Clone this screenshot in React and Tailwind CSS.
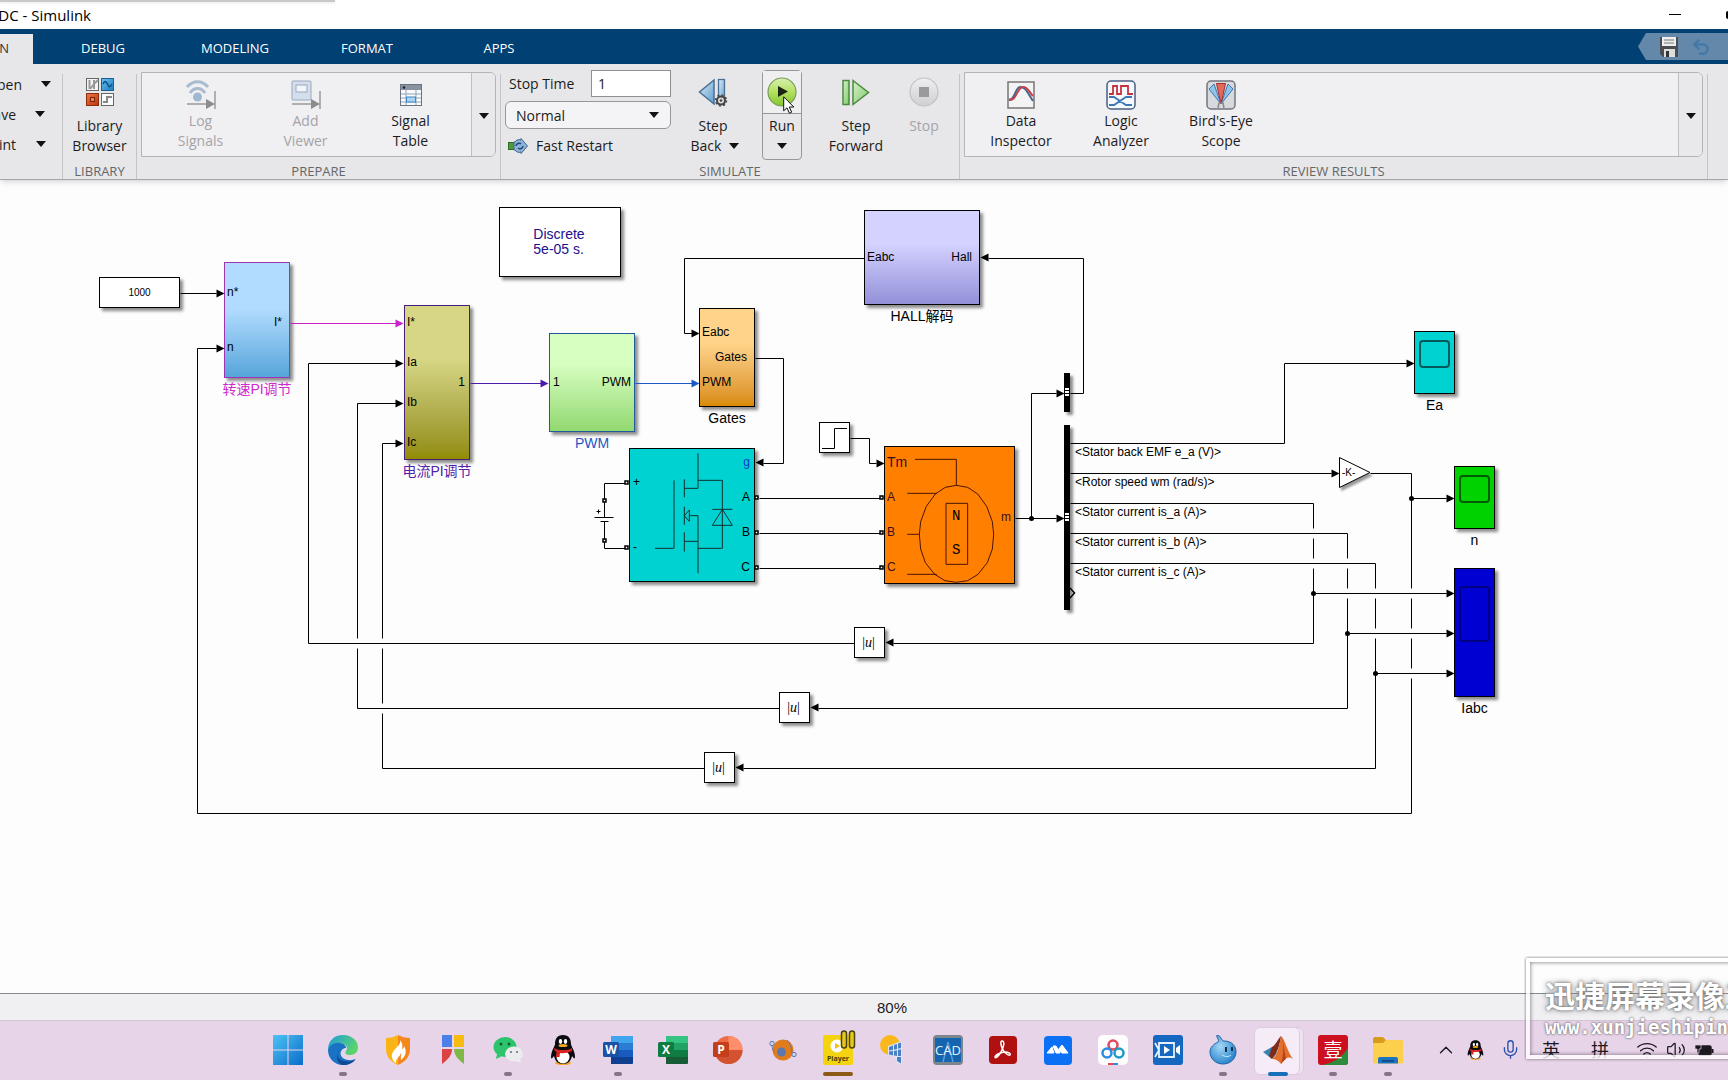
import { useState } from "react";
import { ChevronUp, Mic, Wifi, Volume2, Undo2 } from "lucide-react";

const ribbonFont = "font-['Open_Sans','Noto_Sans_CJK_SC',sans-serif]";
const blockFont = "font-['Liberation_Sans','Noto_Sans_CJK_SC',sans-serif]";

const Caret = ({ className = "" }) => (
  <svg viewBox="0 0 10 6" className={`w-[10px] h-[6px] shrink-0 ${className}`}><path d="M0 0h10L5 6z" fill="#111" /></svg>
);

/* ---------- toolstrip icons ---------- */

const LibraryIcon = () => (
  <svg viewBox="0 0 28 28" className="w-7 h-7">
    <defs>
      <linearGradient id="lib-b" x1="0" y1="0" x2="1" y2="1"><stop offset="0" stopColor="#6cc0ee" /><stop offset="1" stopColor="#1c7cc0" /></linearGradient>
      <linearGradient id="lib-r" x1="0" y1="0" x2="1" y2="1"><stop offset="0" stopColor="#ee7a44" /><stop offset="1" stopColor="#b83410" /></linearGradient>
    </defs>
    <rect x="0.5" y="0.5" width="12" height="12" fill="#f4f4f4" stroke="#666" />
    <path d="M3.500 2v9M4 11l4-5V2M8 11V6l4-4" fill="none" stroke="#999" strokeWidth="2" />
    <rect x="15.5" y="0.5" width="12" height="12" fill="url(#lib-b)" stroke="#1b5f94" />
    <path d="M17 6c2-5 4-1 5 1s2 3 4-1" fill="none" stroke="#0b4f86" strokeWidth="1.500" />
    <rect x="0.5" y="15.5" width="12" height="12" fill="url(#lib-r)" stroke="#8f2c0c" />
    <rect x="4.5" y="19.5" width="4" height="4" fill="#e9824f" stroke="#7c2408" />
    <rect x="15.5" y="15.5" width="12" height="12" fill="#fafafa" stroke="#666" />
    <path d="M17 24h4v-5h5" fill="none" stroke="#888" strokeWidth="2" />
  </svg>
);

const LogSignalsIcon = () => (
  <svg viewBox="0 0 30 30" className="w-[30px] h-[30px]">
    <path d="M1 7c6-7 15-7 21 0M4 13c4-6 11-6 15 0" fill="none" stroke="#a9bccf" strokeWidth="3" />
    <circle cx="11.500" cy="17" r="4.500" fill="#a0b8d0" />
    <path d="M1 24h20M29 11v18" stroke="#9a9a9a" strokeWidth="1.500" />
    <path d="M20 19l9 5-9 5z" fill="#8c8c8c" />
  </svg>
);

const AddViewerIcon = () => (
  <svg viewBox="0 0 30 30" className="w-[30px] h-[30px]">
    <rect x="1" y="1" width="19" height="19" rx="1" fill="#d5dfec" stroke="#97a8bf" />
    <rect x="5" y="5" width="11" height="7" fill="#f1f5fa" stroke="#97a8bf" />
    <path d="M1 24h20M29 11v18" stroke="#9a9a9a" strokeWidth="1.500" />
    <path d="M20 19l9 5-9 5z" fill="#8c8c8c" />
  </svg>
);

const SignalTableIcon = () => (
  <svg viewBox="0 0 22 22" className="w-[22px] h-[30px]">
    <rect x="0.5" y="0.5" width="21" height="21" fill="#fbfbfb" stroke="#6b7480" />
    <path d="M1 1h20v5H1z" fill="#8792a3" />
    <circle cx="4" cy="3.500" r="1.300" fill="#222" />
    <path d="M1 10h20M1 14h20M1 18h20M6 6v15M16 6v15" stroke="#8fa3b8" />
    <rect x="6.500" y="13" width="9" height="5" fill="#a8d4f5" stroke="#3c86c4" />
  </svg>
);

const FastRestartIcon = () => (
  <svg viewBox="0 0 20 16" className="w-5 h-4">
    <rect x="0.500" y="4.500" width="6" height="7" fill="#4f9a3c" stroke="#2d6b22" />
    <path d="M6 4h1c1-2 4-3 6-2V.5L19.500 8 13 15.500V14c-2 1-5 0-6-2H6z" fill="#8fb2da" stroke="#41648c" />
    <path d="M8 8a3 3 0 015-2M15 8a3 3 0 01-5 2" fill="none" stroke="#1d4878" strokeWidth="1.500" />
  </svg>
);

const StepBackIcon = () => (
  <svg viewBox="0 0 30 30" className="w-[30px] h-[30px]">
    <defs><linearGradient id="sb" x1="0" y1="0" x2="1" y2="1"><stop offset="0" stopColor="#d9ecfa" /><stop offset="1" stopColor="#5f9bcb" /></linearGradient></defs>
    <path d="M16 2v24L1.500 14z" fill="url(#sb)" stroke="#4b6f92" strokeWidth="1.500" />
    <rect x="20.500" y="1.500" width="6" height="25" fill="url(#sb)" stroke="#4b6f92" strokeWidth="1.300" />
    <circle cx="23" cy="22.500" r="4" fill="#ddd" stroke="#444" strokeWidth="2" />
    <circle cx="23" cy="22.500" r="5.500" fill="none" stroke="#444" strokeWidth="1.500" strokeDasharray="2 2.300" />
    <circle cx="23" cy="22.500" r="1.300" fill="#444" />
  </svg>
);

const RunIcon = () => (
  <svg viewBox="0 0 30 30" className="w-[30px] h-[30px]">
    <defs><linearGradient id="run" x1="0" y1="0" x2="0" y2="1"><stop offset="0" stopColor="#d6f0b0" /><stop offset=".5" stopColor="#b4e060" /><stop offset="1" stopColor="#84c42c" /></linearGradient></defs>
    <circle cx="15" cy="15" r="14" fill="url(#run)" stroke="#7a9c5c" strokeWidth="1.200" />
    <path d="M11 9l10 5.500L11 20z" fill="#1c2416" />
  </svg>
);

const StepForwardIcon = () => (
  <svg viewBox="0 0 30 30" className="w-[30px] h-[30px]">
    <defs><linearGradient id="sf" x1="0" y1="0" x2="1" y2="1"><stop offset="0" stopColor="#d8f2cc" /><stop offset="1" stopColor="#7fc86a" /></linearGradient></defs>
    <rect x="2" y="2.500" width="6" height="24" fill="url(#sf)" stroke="#4c8a42" strokeWidth="1.500" />
    <path d="M12 2.500L27.500 14.500 12 26.500z" fill="url(#sf)" stroke="#4c8a42" strokeWidth="1.500" />
  </svg>
);

const StopIcon = () => (
  <svg viewBox="0 0 30 30" className="w-[30px] h-[30px]">
    <defs><linearGradient id="stop" x1="0" y1="0" x2="0" y2="1"><stop offset="0" stopColor="#efeff0" /><stop offset="1" stopColor="#cfcfd2" /></linearGradient></defs>
    <circle cx="15" cy="15" r="14" fill="url(#stop)" stroke="#c2c2c4" strokeWidth="1.200" />
    <rect x="10" y="10" width="10" height="10" fill="#9a9a9c" />
  </svg>
);

const DataInspectorIcon = () => (
  <svg viewBox="0 0 28 30" className="w-7 h-[30px]">
    <rect x="1" y="2" width="26" height="26" fill="#f3f3f4" stroke="#777" strokeWidth="1.500" />
    <path d="M2 20c6 1 6-13 11-13s6 3 8 6 3 5 5 8" fill="none" stroke="#44688f" strokeWidth="2" />
    <path d="M2 19c7 4 8-12 14-12 5 0 6 5 10 9" fill="none" stroke="#c8404a" strokeWidth="2" />
  </svg>
);

const LogicAnalyzerIcon = () => (
  <svg viewBox="0 0 30 30" className="w-[30px] h-[30px]">
    <rect x="1" y="1" width="28" height="28" rx="4" fill="#f5f8fc" stroke="#4a5f80" strokeWidth="1.500" />
    <path d="M3 14h4V6h4v8h4V6h7v8h5" fill="none" stroke="#c8323c" strokeWidth="1.800" />
    <path d="M3 17h5l12 8h6M3 25h5l12-8h6" fill="none" stroke="#3c78b4" strokeWidth="1.800" />
  </svg>
);

const BirdsEyeIcon = () => (
  <svg viewBox="0 0 30 30" className="w-[30px] h-[30px]">
    <rect x="1" y="1" width="28" height="28" rx="4" fill="#d8d9dc" stroke="#707680" strokeWidth="1.500" />
    <path d="M3 9l5-5 7 20z" fill="#8ec4ea" stroke="#3c78b4" />
    <path d="M27 9l-5-5-7 20z" fill="#8ec4ea" stroke="#3c78b4" />
    <path d="M10.500 3.500h9L15 24z" fill="#e06a5c" stroke="#a82c2c" />
    <path d="M12 28l1-5h4l1 5" fill="none" stroke="#888" strokeWidth="1.500" />
  </svg>
);

/* ---------- toolstrip ---------- */

const Separator = () => <div className="w-px bg-[#c4c4c8] mt-[10px] shrink-0" />;

const Section = ({ title, className = "", children }) => (
  <section className={`flex flex-col pt-2 shrink-0 ${className}`}>
    <div className="h-[91px]">{children}</div>
    <h2 className="text-center text-[13px] leading-4 text-[#666]">{title}</h2>
  </section>
);

const GalleryItem = ({ icon, label, disabled, className }) => (
  <button disabled={disabled} className={`flex flex-col items-center pt-[7px] text-[14px] leading-5 ${className} ${disabled ? "text-[#a4a4a8]" : "text-[#1c1c1c]"}`}>
    <span className="h-[31px] flex items-start">{icon}</span>
    {label.map((l) => <span key={l}>{l}</span>)}
  </button>
);

const Gallery = ({ name, children }) => (
  <div className="h-[85px] mx-1 flex border border-[#b4b4b8] rounded-r-md bg-[#f0eff2] overflow-hidden">
    <div className="flex flex-1 pl-[6px]">{children}</div>
    <button aria-label={name} className="w-6 border-l border-[#c0c0c4] bg-[#e9e9ec] flex items-center justify-center"><Caret className="mt-[2px]" /></button>
  </div>
);

const fileMenu = [
  { label: "Open", w: "w-[22px]", gap: "ml-[19px]" },
  { label: "Save", w: "w-4", gap: "ml-[19px]" },
  { label: "Print", w: "w-4", gap: "ml-5" },
];

const Toolstrip = () => {
  const [stopTime, setStopTime] = useState("1");
  const [mode, setMode] = useState("Normal");

  return (
    <div className="relative z-10 h-[116px] flex bg-[#e7e7ea] border-b border-[#a4a4a8] shadow-md text-[14px] text-[#1c1c1c]">
      <div className="w-[62px] shrink-0 pt-[5px]">
        {fileMenu.map((m) => (
          <button key={m.label} className="h-[30px] flex items-center">
            <span className={`flex justify-end overflow-hidden ${m.w}`}>{m.label}</span>
            <Caret className={m.gap} />
          </button>
        ))}
      </div>
      <Separator />
      <Section title="LIBRARY" className="w-[73px]">
        <button className="w-full flex flex-col items-center pt-[6px] leading-5">
          <LibraryIcon />
          <span className="mt-[10px]">Library</span>
          <span>Browser</span>
        </button>
      </Section>
      <Separator />
      <Section title="PREPARE" className="w-[363px]">
        <Gallery name="More prepare tools">
          <GalleryItem className="w-[105px]" icon={<LogSignalsIcon />} label={["Log", "Signals"]} disabled />
          <GalleryItem className="w-[105px]" icon={<AddViewerIcon />} label={["Add", "Viewer"]} disabled />
          <GalleryItem className="w-[105px]" icon={<SignalTableIcon />} label={["Signal", "Table"]} />
        </Gallery>
      </Section>
      <Separator />
      <Section title="SIMULATE" className="w-[458px]">
        <div className="flex -mt-[2px]">
          <div className="w-[166px] ml-1">
            <div className="flex items-center justify-between">
              <label htmlFor="stop-time" className="ml-1">Stop Time</label>
              <input id="stop-time" value={stopTime} onChange={(e) => setStopTime(e.target.value)} className="w-20 h-[27px] px-[6px] bg-white border border-[#8f8f93] outline-none" />
            </div>
            <div className="relative mt-1">
              <select aria-label="Simulation mode" value={mode} onChange={(e) => setMode(e.target.value)} className="appearance-none w-full h-7 pl-[10px] rounded-md border border-[#97979b] bg-[#f4f4f6] outline-none">
                <option>Normal</option>
                <option>Accelerator</option>
                <option>Rapid Accelerator</option>
              </select>
              <Caret className="absolute right-3 top-[11px] pointer-events-none" />
            </div>
            <button className="flex items-center gap-2 mt-[7px] ml-[3px] leading-5"><FastRestartIcon />Fast Restart</button>
          </div>
          <button className="w-[70px] ml-[7px] flex flex-col items-center pt-2 leading-5">
            <StepBackIcon />
            <span className="mt-2">Step</span>
            <span className="flex items-center gap-2 pl-1">Back <Caret /></span>
          </button>
          <div className="relative w-10 h-[90px] ml-[14px] rounded-[4px] border border-[#97979b] flex flex-col">
            <button aria-label="Run" className="h-[43px] w-full flex items-center justify-center bg-[#efeff1] border-b border-[#97979b]"><RunIcon /></button>
            <button className="flex-1 flex flex-col items-center leading-5 pt-[2px]">Run<Caret className="mt-[7px]" /></button>
            <svg viewBox="0 0 12 18" className="absolute left-5 top-[25px] w-3 h-[18px]">
              <path d="M.7.8v14l3.300-3 2.400 5.400 2.300-1-2.400-5.200h4.500z" fill="#fff" stroke="#111" />
            </svg>
          </div>
          <button className="w-[66px] ml-[21px] flex flex-col items-center pt-2 leading-5">
            <StepForwardIcon />
            <span className="mt-2">Step</span>
            <span>Forward</span>
          </button>
          <button disabled className="w-10 ml-[15px] flex flex-col items-center pt-[7px] leading-5 text-[#a4a4a8]">
            <StopIcon />
            <span className="mt-[9px]">Stop</span>
          </button>
        </div>
      </Section>
      <Separator />
      <Section title="REVIEW RESULTS" className="flex-1">
        <Gallery name="More result viewers">
          <GalleryItem className="w-[100px]" icon={<DataInspectorIcon />} label={["Data", "Inspector"]} />
          <GalleryItem className="w-[100px]" icon={<LogicAnalyzerIcon />} label={["Logic", "Analyzer"]} />
          <GalleryItem className="w-[100px]" icon={<BirdsEyeIcon />} label={["Bird's-Eye", "Scope"]} />
        </Gallery>
      </Section>
      <Separator />
      <div className="w-5 shrink-0" />
    </div>
  );
};

const Header = () => (
  <header className="shrink-0">
    <div className="relative h-[29px] bg-white flex items-center justify-between">
      <div className="absolute left-0 top-0 w-[335px] h-[2px] bg-[#c9c9c9] shadow-sm" />
      <h1 className="w-[91px] flex justify-end overflow-hidden whitespace-nowrap text-[15px] leading-5 text-black">DC - Simulink</h1>
      <div className="flex items-center gap-[45px]">
        <button aria-label="Minimize" className="w-3 h-5 flex items-center"><span className="w-3 h-px bg-black" /></button>
        <button aria-label="Maximize" className="w-[2px] h-2 border-l-2 border-black rounded-l" />
      </div>
    </div>
    <nav className="h-[35px] bg-[#004073] flex items-end justify-between text-[13px] text-white">
      <div className="flex items-end">
        <button className="w-[33px] h-[30px] pr-6 mr-1 flex items-center justify-end overflow-hidden bg-[#e7e7ea] text-[#333]">SIMULATION</button>
        {["DEBUG", "MODELING", "FORMAT", "APPS"].map((t) => (
          <button key={t} className="w-[132px] h-[30px]">{t}</button>
        ))}
      </div>
      <div className="relative w-[90px] h-[27px] mb-1 flex items-center">
        <svg viewBox="0 0 90 27" className="absolute inset-0 w-[90px] h-[27px]"><path d="M0 13.500L8 0h82v27H8z" fill="#6488aa" /></svg>
        <button aria-label="Save" className="relative ml-[21px]">
          <svg viewBox="0 0 20 20" className="w-5 h-5">
            <path d="M1 0h18v20H4l-3-3z" fill="#4a4d52" />
            <path d="M3 0h14v9H3z" fill="#eee" />
            <path d="M5 3h10M5 6h10" stroke="#777" />
            <path d="M5 12h11v8H5z" fill="#ddd" />
            <path d="M7 14h3v6H7z" fill="#333" />
          </svg>
        </button>
        <button aria-label="Undo" className="relative ml-3 text-[#4478a6]"><Undo2 size={20} strokeWidth={3} /></button>
      </div>
    </nav>
    <Toolstrip />
  </header>
);

/* ---------- block diagram ---------- */

// lines that leave or join blocks; a gap in a vertical line is a crossing
const wires = [
  { d: "M180 293H216", tip: [224, 293] },
  { d: "M290 323H396", tip: [403, 323], color: "#c822c8" },
  { d: "M470 383H541", tip: [548, 383], color: "#4a1ca8" },
  { d: "M635 383H692", tip: [699, 383], color: "#1e58c8" },
  { d: "M1370 473H1411V588M1411 598V628M1411 638V668M1411 678V813H197V348H216", tip: [224, 348] },
  { d: "M1411 498H1446", tip: [1454, 498] },
  { d: "M854 643H308V363H396", tip: [403, 363] },
  { d: "M779 708H357V648M357 638V403H396", tip: [403, 403] },
  { d: "M704 768H382V713M382 703V648M382 638V443H396", tip: [403, 443] },
  { d: "M864 258H684V333H692", tip: [699, 333] },
  { d: "M755 358H783V463H763", tip: [755, 462], left: true },
  { d: "M850 438H869V463H876", tip: [884, 463] },
  { d: "M759 498H880M759 533H880M759 568H880" },
  { d: "M1015 518H1056", tip: [1064, 518] },
  { d: "M1031 518V393H1056", tip: [1064, 393] },
  { d: "M1070 393H1083V258H988", tip: [980, 257], left: true },
  { d: "M1070 443H1284V363H1406", tip: [1414, 363] },
  { d: "M1070 473H1331", tip: [1339, 473] },
  { d: "M1070 503H1313V528M1313 538V558M1313 568V643H893", tip: [885, 642], left: true },
  { d: "M1070 533H1347V558M1347 568V588M1347 598V708H818", tip: [810, 707], left: true },
  { d: "M1070 563H1375V588M1375 598V628M1375 638V768H743", tip: [735, 767], left: true },
  { d: "M1313 593H1446", tip: [1454, 593] },
  { d: "M1347 633H1446", tip: [1454, 633] },
  { d: "M1375 673H1446", tip: [1454, 673] },
];

const dots = [[1031, 518], [1411, 498], [1313, 593], [1347, 633], [1375, 673]];
const ports = [[756, 497], [756, 532], [756, 567], [881, 497], [881, 532], [881, 567], [626, 482], [626, 547], [604, 500], [604, 540]];

const Wires = () => (
  <svg viewBox="0 180 1728 813" className="absolute left-0 top-0 w-[1728px] h-[813px]">
    <g transform="translate(.5 .5)">
      {wires.map((w) => (
        <g key={w.d}>
          <path d={w.d} fill="none" stroke={w.color || "#000"} />
          {w.tip && <path d={w.left ? `M${w.tip[0]} ${w.tip[1]}l8-4v8z` : `M${w.tip[0]} ${w.tip[1]}l-8-4v8z`} fill={w.color || "#000"} />}
        </g>
      ))}
      {dots.map(([x, y]) => <circle key={`${x}-${y}`} cx={x} cy={y} r="2.500" />)}
      {/* dc source */}
      <path d="M627 483H604V517M594 517H613M600 521H608M604 521V548H627M596 511h4M598 509v4" fill="none" stroke="#000" />
      {ports.map(([x, y]) => <rect key={`${x}-${y}`} x={x - 1.500} y={y - 1.500} width="3" height="3" fill="#fff" stroke="#000" strokeWidth="1.500" />)}
    </g>
  </svg>
);

const shadow = "shadow-[3px_3px_3px_rgba(0,0,0,0.45)]";

const Block = ({ border = "border-black", className, children }) => (
  <div className={`absolute border ${border} ${shadow} ${className}`}>{children}</div>
);

const Port = ({ className, children }) => (
  <span className={`absolute text-[12px] leading-4 ${className}`}>{children}</span>
);

const Name = ({ className = "", children }) => (
  <span className={`absolute top-full left-1/2 -translate-x-1/2 mt-1 whitespace-nowrap text-[14px] leading-4 ${className}`}>{children}</span>
);

const Scope = ({ className, screen, name }) => (
  <Block className={className}>
    <div className={`mx-1 border-2 rounded-[4px] ${screen}`} />
    <Name>{name}</Name>
  </Block>
);

const signals = ["<Stator back EMF e_a (V)>", "<Rotor speed wm (rad/s)>", "<Stator current is_a (A)>", "<Stator current is_b (A)>", "<Stator current is_c (A)>"];

const BusPort = ({ className }) => (
  <div className={`absolute left-px w-1 h-2 bg-white border-y border-white flex flex-col justify-evenly ${className}`}>
    <span className="h-px bg-black" />
    <span className="h-px bg-black" />
  </div>
);

const Abs = ({ className }) => (
  <Block className={`w-[31px] h-[31px] pr-[2px] bg-white flex items-center justify-center font-['Liberation_Serif',serif] text-[14px] leading-4 ${className}`}>
    |<i>u</i>|
  </Block>
);

const Diagram = () => (
  <main className={`relative flex-1 min-h-[813px] overflow-hidden bg-[#fdfdfd] text-black ${blockFont}`}>
    <Block className="left-[99px] top-[97px] w-[81px] h-[31px] bg-white text-[10px] flex items-center justify-center">1000</Block>

    <Block border="border-[#a032b4]" className="left-[224px] top-[82px] w-[66px] h-[116px] bg-linear-to-b from-[#b2dcff] from-40% to-[#55a5da]">
      <Port className="left-[2px] top-[21px]">n*</Port>
      <Port className="right-[7px] top-[51px]">I*</Port>
      <Port className="left-[2px] top-[76px]">n</Port>
      <Name className="text-[#cc2ccc]">转速PI调节</Name>
    </Block>

    <Block border="border-[#48207c]" className="left-[404px] top-[125px] w-[66px] h-[155px] bg-linear-to-b from-[#d6d684] from-35% to-[#928c00]">
      <Port className="left-[2px] top-[8px]">I*</Port>
      <Port className="left-[2px] top-[48px]">Ia</Port>
      <Port className="left-[2px] top-[88px]">Ib</Port>
      <Port className="left-[2px] top-[128px]">Ic</Port>
      <Port className="right-[4px] top-[68px]">1</Port>
      <Name className="text-[#5020a8]">电流PI调节</Name>
    </Block>

    <Block className="left-[499px] top-[27px] w-[122px] h-[70px] pr-[2px] bg-white flex items-center justify-center">
      <p className="text-[14px] leading-[15px] text-[#1a1090]">Discrete<br />5e-05 s.</p>
    </Block>

    <Block border="border-[#205a9c]" className="left-[549px] top-[153px] w-[86px] h-[99px] bg-linear-to-b from-[#d8ffc2] from-30% to-[#92d870]">
      <Port className="left-[3px] top-[40px]">1</Port>
      <Port className="right-[3px] top-[40px]">PWM</Port>
      <Name className="text-[#1e58c8]">PWM</Name>
    </Block>

    <Block className="left-[699px] top-[128px] w-[56px] h-[99px] bg-linear-to-b from-[#ffd48a] from-35% to-[#d88c00]">
      <Port className="left-[2px] top-[15px]">Eabc</Port>
      <Port className="right-[7px] top-[40px]">Gates</Port>
      <Port className="left-[2px] top-[65px]">PWM</Port>
      <Name>Gates</Name>
    </Block>

    <Block className="left-[864px] top-[30px] w-[116px] h-[95px] bg-linear-to-b from-[#d4d2ff] from-35% to-[#9490d8]">
      <Port className="left-[2px] top-[38px]">Eabc</Port>
      <Port className="right-[7px] top-[38px]">Hall</Port>
      <Name>HALL解码</Name>
    </Block>

    {/* mosfet bridge */}
    <Block className="left-[629px] top-[268px] w-[126px] h-[134px] bg-[#00d2d2]">
      <svg viewBox="151 147 372 396" className="absolute inset-0 w-full h-full">
        <path d="M226 445H283V241M314 238v54M314 320v54M314 397v58M355 160V265H314M314 424H355M330 347H355V520M355 241H428V445H355M398 328h60M428 328l-30 48h60zM314 347l15-17v34z" fill="none" stroke="#12302f" strokeWidth="3" />
      </svg>
      <Port className="right-1 top-[5px] text-[#0a3cc8]">g</Port>
      <Port className="right-1 top-[40px]">A</Port>
      <Port className="right-1 top-[75px]">B</Port>
      <Port className="right-1 top-[110px]">C</Port>
      <Port className="left-[3px] top-[25px]">+</Port>
      <Port className="left-[3px] top-[90px]">-</Port>
    </Block>

    {/* load torque step */}
    <Block className="left-[819px] top-[242px] w-[31px] h-[31px] bg-white">
      <svg viewBox="0 0 29 29" className="w-full h-full"><path d="M2 25.500H14.500V5.500H27" fill="none" stroke="#000" /></svg>
    </Block>

    {/* permanent magnet machine */}
    <Block className="left-[884px] top-[266px] w-[131px] h-[138px] bg-[#ff8000] text-[#3a0c20]">
      <svg viewBox="915 141 387 408" className="absolute inset-0 w-full h-full">
        <path d="M1005 178H1129V256M982 280h88M982 403h37M982 523h88M1098 310h65v183h-65zM1129 256l34 6 30 20 27 37 17 46 4 38-4 44-15 41-28 35-31 19-34 5-34-5-31-19-28-35-14-41-4-44 4-38 17-46 27-37 30-20z" fill="none" stroke="#4a1400" strokeWidth="3" />
      </svg>
      <span className="absolute left-[2px] top-[7px] text-[14px] leading-4">Tm</span>
      <Port className="left-[2px] top-[42px]">A</Port>
      <Port className="left-[2px] top-[77px]">B</Port>
      <Port className="left-[2px] top-[112px]">C</Port>
      <Port className="right-[3px] top-[62px]">m</Port>
      <span className="absolute left-[67px] top-[61px] text-[14px] leading-4 text-black font-['Liberation_Mono',monospace]">N</span>
      <span className="absolute left-[67px] top-[95px] text-[14px] leading-4 text-black font-['Liberation_Mono',monospace]">S</span>
    </Block>

    <div className={`absolute left-[1064px] top-[193px] w-[6px] h-[39px] bg-black ${shadow}`}><BusPort className="top-[15px]" /></div>
    <div className={`absolute left-[1064px] top-[245px] w-[6px] h-[185px] bg-black ${shadow}`}>
      <BusPort className="top-[88px]" />
      <svg viewBox="0 0 6 12" className="absolute left-[6px] bottom-[11px] w-[6px] h-3"><path d="M0 1l4.500 5L0 11" fill="none" stroke="#000" strokeWidth="1.500" /></svg>
      <ul className="absolute left-[11px] top-[19px] whitespace-nowrap text-[12px] leading-4">
        {signals.map((s) => <li key={s} className="h-[30px]">{s}</li>)}
      </ul>
    </div>

    <div className="absolute left-[1338px] top-[276px] w-[34px] h-[32px]">
      <svg viewBox="0 0 34 32" className="absolute inset-0 w-full h-full drop-shadow-[2px_3px_1px_rgba(0,0,0,0.4)]"><path d="M1.500 1.500v30L32 16.500z" fill="#fff" stroke="#000" /></svg>
      <span className="absolute left-1 top-[9px] text-[10px] leading-4">-K-</span>
    </div>

    <Scope name="Ea" className="left-[1414px] top-[151px] w-[41px] h-[63px] bg-[#00d2d2] pt-2" screen="h-7 border-[#045a5a]" />
    <Scope name="n" className="left-[1454px] top-[286px] w-[41px] h-[63px] bg-[#00d200] pt-2" screen="h-7 border-[#045a04]" />
    <Scope name="Iabc" className="left-[1454px] top-[388px] w-[41px] h-[129px] bg-[#0000d2] pt-[17px]" screen="h-14 border-[#000080]" />

    <Abs className="left-[854px] top-[447px]" />
    <Abs className="left-[779px] top-[512px]" />
    <Abs className="left-[704px] top-[572px]" />

    <Wires />
  </main>
);

/* ---------- taskbar ---------- */

const Icon = ({ children }) => <svg viewBox="0 0 30 30" className="w-[30px] h-[30px] font-['Open_Sans','Noto_Sans_CJK_SC',sans-serif]">{children}</svg>;

const OfficeIcon = ({ letter, c }) => (
  <Icon>
    {letter === "P" ? (
      <>
        <circle cx="15.500" cy="15" r="14" fill={c[1]} />
        <path d="M15.500 1a14 14 0 0114 14h-14z" fill={c[0]} />
        <path d="M1.500 15h28a14 14 0 01-28 0z" fill={c[2]} />
      </>
    ) : (
      <>
        <rect x="8" y="1" width="22" height="28" rx="1.500" fill={c[1]} />
        <path d="M8 1h22v7H8z" fill={c[0]} />
        <path d="M8 15h22v7H8z" fill={c[2]} />
        <path d="M8 22h22v5.500a1.500 1.500 0 01-1.500 1.500H8z" fill={c[3]} />
      </>
    )}
    <rect x="0" y="7" width="16" height="15" rx="1.500" fill={c[4]} />
    <text x="8" y="19" textAnchor="middle" fontSize="12" fontWeight="700" fill="#fff">{letter}</text>
  </Icon>
);

const QQ = () => (
  <>
    <ellipse cx="15" cy="28" rx="8" ry="2" fill="#f5a81c" />
    <path d="M15 0c-6 0-8 4-8 9 0 2-4 7-4 13 0 2 1 2 3-1 1 5 4 8 9 8s8-3 9-8c2 3 3 3 3 1 0-6-4-11-4-13 0-5-2-9-8-9z" fill="#0c0c10" />
    <ellipse cx="15" cy="22" rx="6.500" ry="6.500" fill="#fff" />
    <ellipse cx="12.500" cy="6.500" rx="1.700" ry="2.400" fill="#fff" />
    <ellipse cx="17.500" cy="6.500" rx="1.700" ry="2.400" fill="#fff" />
    <ellipse cx="15" cy="10.500" rx="4.500" ry="1.600" fill="#f5a81c" />
    <path d="M6 13c5 3 13 3 18 0v3c-4 2-9 2.500-12 2l-.5 4H8l.5-5-2-1.500z" fill="#dc2020" />
  </>
);

const apps = [
  { name: "Start", icon: <Icon><defs><linearGradient id="win" x1="0" y1="0" x2="1" y2="1"><stop offset="0" stopColor="#4cc2f4" /><stop offset="1" stopColor="#0a6cc8" /></linearGradient></defs><path d="M0 0h14.500v14.500H0zM15.500 0H30v14.500H15.500zM0 15.500h14.500V30H0zM15.500 15.500H30V30H15.500z" fill="url(#win)" /></Icon> },
  { name: "Edge", mark: "dot", icon: <Icon><defs><linearGradient id="edg" x1="0" y1="0" x2="1" y2=".5"><stop offset="0" stopColor="#1c9ce0" /><stop offset="1" stopColor="#5cd46c" /></linearGradient></defs><path d="M0 15C0 6 6 0 15 0s15 6 15 12-4 8-8 8-5-1.500-4.500-3 1.500-2 1.500-4-3-5-7-5C6 8 1 12 0 15z" fill="url(#edg)" /><path d="M0 15C1 10 7 7 12 8c4 0 6 3 6 5-6 0-9 10 2 12 4 .5 6-.5 7.500-1C25 28 20 30 15 30 6 30 0 23 0 15z" fill="#1a72c4" /><path d="M12 14c-4 4-3 11 4 12 5 1 9 0 11.500-2C25 28 20 30 15 30 9 30 7 20 12 14z" fill="#124a94" /></Icon> },
  { name: "Huorong", icon: <Icon><path d="M3 3c5 0 8-1 12-3v30C8 27 3 22 3 14z" fill="#fbb416" /><path d="M27 3c-5 0-8-1-12-3v30c7-3 12-8 12-16z" fill="#f5861a" /><path d="M17 5c2 6-9 9-8 17 .3 3 2 5 4 6-1-5 5-6 5-11 1 3-1 6 0 8 5-4 6-9 3-14 0 2-1 3-2 3 1-4 0-7-2-9z" fill="#fff" /></Icon> },
  { name: "Bookmarks", icon: <Icon><path d="M4 0h10v12H4z" fill="#4c80e8" /><path d="M16 0h10v12H16z" fill="#f8bc10" /><path d="M4 14h10c0 7-5 11-10 15z" fill="#dc4444" /><path d="M16 14h10v15c-5-4-10-8-10-15z" fill="#80b848" /></Icon> },
  { name: "WeChat", mark: "dot", icon: <Icon><ellipse cx="12" cy="12" rx="11.500" ry="10" fill="#2cc46c" /><path d="M4 19l-1 5 6-3z" fill="#2cc46c" /><circle cx="8" cy="9" r="1.500" fill="#145c34" /><circle cx="16" cy="9" r="1.500" fill="#145c34" /><ellipse cx="21" cy="19" rx="9" ry="7.500" fill="#ecebee" /><path d="M27 24l1 4-5-2z" fill="#ecebee" /><circle cx="18" cy="17" r="1.100" fill="#777" /><circle cx="24" cy="17" r="1.100" fill="#777" /></Icon> },
  { name: "QQ", icon: <Icon><QQ /></Icon> },
  { name: "Word", mark: "dot", icon: <OfficeIcon letter="W" c={["#41a5ee", "#2b7cd3", "#185abd", "#103f91", "#1a52a8"]} /> },
  { name: "Excel", icon: <OfficeIcon letter="X" c={["#33c481", "#21a366", "#107c41", "#185c37", "#107c41"]} /> },
  { name: "PowerPoint", icon: <OfficeIcon letter="P" c={["#ff8f6b", "#ed6c47", "#d35230", "#b83b1d", "#c43e1c"]} /> },
  { name: "Orbit", icon: <Icon><circle cx="15" cy="15" r="10.500" fill="#e07c1c" /><path d="M4 10c0 4 1 5 2 7M19 5c3 3 5 8 5 13" stroke="#5c78b0" fill="none" /><circle cx="13.500" cy="17" r="4.500" fill="#5c78b0" /><circle cx="4" cy="8.500" r="2.200" fill="#cfd4ea" stroke="#5c78b0" /><circle cx="26" cy="19.500" r="2.200" fill="#cfd4ea" stroke="#5c78b0" /></Icon> },
  { name: "Player", mark: "gold", icon: <svg viewBox="0 -5 33 35" className="w-[33px] h-[35px] -mt-[5px] ml-[3px] font-['Open_Sans',sans-serif]"><rect width="30" height="30" rx="2" fill="#f4d410" /><circle cx="14" cy="11" r="6.500" fill="#fff" /><path d="M12 8l5 3-5 3z" fill="#f4c010" /><text x="15" y="26" textAnchor="middle" fontSize="7" fontWeight="700" fill="#4a3c08">Player</text><rect x="18.500" y="-4" width="5" height="17" rx="2.500" fill="#e4c820" stroke="#4c440c" strokeWidth="1.500" /><rect x="26.500" y="-4" width="5" height="17" rx="2.500" fill="#e4c820" stroke="#4c440c" strokeWidth="1.500" /></svg> },
  { name: "Solar", icon: <Icon><circle cx="12" cy="10" r="10" fill="#fab81c" /><path d="M10 11l14-5v24l-6-3v-5l-8-2z" fill="#dce8f6" /><path d="M11 12l4-1.500V15l-4 .5zM16 10l3-1v5l-3 .8zM20 8.500L23 7.500V13l-3 .8zM11 16.500l4-.5v4.500l-4-1zM16 16l3-.8V21l-3-.5zM20 15l3-.8V21h-3zM19 22h4v6.500L19 26z" fill="#4c80c4" /></Icon> },
  { name: "CAD", icon: <Icon><rect x="0" y="0" width="30" height="30" rx="4" fill="#7c848c" /><rect x="2" y="3" width="26" height="24" fill="#1464b0" /><path d="M10 27l5-20 5 20" fill="none" stroke="#5c9cd8" strokeWidth="1.500" /><text x="15" y="20" textAnchor="middle" fontSize="13" fill="#e8f4ff">CAD</text></Icon> },
  { name: "Acrobat", icon: <Icon><rect x="1" y="1" width="28" height="28" rx="4" fill="#b01010" /><path d="M14 6c3 0 2 6-1 11s-6 7-6 5 6-5 10-5 6 2 5 3-6-2-8-7c-1-3-2-7 0-7z" fill="none" stroke="#fff" strokeWidth="1.500" /></Icon> },
  { name: "Mubu", icon: <Icon><rect x="1" y="1" width="28" height="29" rx="4" fill="#0c70f4" /><path d="M4 18l5-6 2 6zM10 11h3l4 7h-4zM15 15l4-5 6 8h-6z" fill="#fff" stroke="#fff" strokeLinejoin="round" /></Icon> },
  { name: "Netdisk", icon: <Icon><rect x="0" y="0" width="30" height="30" rx="5" fill="#fdfdfe" /><circle cx="15" cy="10" r="4.500" fill="none" stroke="#e0485c" strokeWidth="2.500" /><circle cx="9" cy="18" r="4.500" fill="none" stroke="#2c8ce4" strokeWidth="2.500" /><circle cx="21" cy="18" r="4.500" fill="none" stroke="#1c9cc4" strokeWidth="2.500" /><path d="M10 29h5" stroke="#e0485c" strokeWidth="2" /><path d="M15 29h5" stroke="#2c8ce4" strokeWidth="2" /></Icon> },
  { name: "Recorder", icon: <Icon><rect x="0" y="0" width="30" height="30" rx="3" fill="#1468c0" /><path d="M2 8l4 7-4 7M6 8h15v14H6z" fill="none" stroke="#e4f0fc" strokeWidth="1.800" /><path d="M11 11l6 4-6 4z" fill="#fff" /><path d="M23 13l4-3v10l-4-3z" fill="#fff" /></Icon> },
  { name: "Aliwangwang", mark: "dot", icon: <Icon><defs><radialGradient id="ali" cx=".4" cy=".4" r=".7"><stop offset="0" stopColor="#a4d8f8" /><stop offset="1" stopColor="#1c7cc8" /></radialGradient></defs><path d="M9 0c5 1 4 6 7 6 8 0 12 5 12 11s-5 12-13 12S2 23 2 17c0-5 4-8 8-10 2-2-2-4-1-7z" fill="url(#ali)" stroke="#2464a0" /><path d="M18 12v5M24 12v4" stroke="#12304c" strokeWidth="2" /><path d="M14 20c3 2 7 2 9 0" fill="none" stroke="#d0ecfc" /></Icon> },
  { name: "MATLAB", mark: "blue", active: true, icon: <Icon><path d="M0 17l9-5 5 6-5 6z" fill="#3c80b0" /><path d="M9 12c3-1 6-8 9-11-1 8-3 16-9 23l-3-3z" fill="#7c2c1c" /><path d="M18 1c4 3 6 15 12 23-5-3-8-1-12 5-2-3-5-5-9-5 6-4 7-13 9-23z" fill="#e0702c" /><path d="M18 1c3 6 3 18 0 28 2-2 3-4 5-5-2-8-2-17-5-23z" fill="#b8401c" /></Icon> },
  { name: "Securities", mark: "dot", icon: <Icon><rect x="0" y="0" width="30" height="30" rx="3" fill="#cc1020" /><path d="M30 13v14a3 3 0 01-3 3H4C16 28 24 22 30 13z" fill="#2c8c3c" /><text x="15" y="22" textAnchor="middle" fontSize="19" fill="#fff">壹</text></Icon> },
  { name: "Explorer", mark: "dot", icon: <Icon><path d="M0 4a2 2 0 012-2h8l3 3h15a2 2 0 012 2v18H0z" fill="#d89c1c" /><path d="M0 8h10l3-3h15a2 2 0 012 2v20a1.500 1.500 0 01-1.500 1.500h-27A1.500 1.500 0 010 27z" fill="#fcd04c" /><path d="M5 28.500V24a2 2 0 012-2h16a2 2 0 012 2v4.500z" fill="#1c74c0" /><path d="M9 26h12" stroke="#0c5090" strokeWidth="2" /></Icon> },
];

const marks = {
  dot: "w-2 bg-[#85748a]",
  gold: "w-[30px] bg-[#8c5a14]",
  blue: "w-5 bg-[#1470b8]",
};

const Taskbar = () => (
  <footer className="relative h-[60px] shrink-0 flex items-center justify-between bg-[#e8d4e9] border-t border-[#d4c4d6] pl-[260px] pr-[14px]">
    <div className="flex">
      {apps.map((a) => (
        <button key={a.name} aria-label={a.name} className="relative w-[55px] h-[58px] pb-[2px] flex items-center justify-center">
          {a.active && (
            <>
              <span className="absolute left-2 top-[5px] w-[46px] h-12 rounded-md bg-[#efe2f2] border border-[#dccbe0]" />
              <span className="absolute left-1 top-[5px] w-[46px] h-12 rounded-md bg-[#f6ecf8] border border-[#dccbe0]" />
            </>
          )}
          <span className="relative flex">{a.icon}</span>
          {a.mark && <span className={`absolute bottom-1 h-1 rounded-full ${marks[a.mark]}`} />}
        </button>
      ))}
    </div>
    <div className="flex items-center pb-[2px] text-[#1c1820]">
      <button aria-label="Hidden icons"><ChevronUp size={22} strokeWidth={1.5} /></button>
      <button aria-label="QQ" className="ml-[10px]"><svg viewBox="2 0 26 30" className="w-[17px] h-5"><QQ /></svg></button>
      <button aria-label="Microphone" className="ml-4 text-[#2850a8]"><Mic size={21} strokeWidth={1.5} /></button>
      <button className="ml-[18px] w-6 text-[18px] leading-6 text-center">英</button>
      <button className="ml-[25px] w-6 text-[18px] leading-6 text-center">拼</button>
      <button aria-label="Network" className="ml-6"><Wifi size={22} strokeWidth={1.5} /></button>
      <button aria-label="Volume" className="ml-2"><Volume2 size={20} strokeWidth={1.5} /></button>
      <button aria-label="Battery" className="ml-2">
        <svg viewBox="0 0 20 16" className="w-5 h-4">
          <rect x="5" y="4" width="12" height="9" rx="1.500" fill="#1c1820" stroke="#1c1820" strokeWidth="1.500" />
          <path d="M18.500 7v4" stroke="#1c1820" strokeWidth="2" />
          <path d="M1 3h6v4H5v4H3V7H1zM2 0v3M6 0v3" fill="#1c1820" stroke="#e8d4e9" strokeWidth=".7" />
        </svg>
      </button>
    </div>
  </footer>
);

// recorder stamp, runs off the right side of the window
const Watermark = () => (
  <div className="absolute right-0 bottom-[18px] z-20 w-[204px] h-[106px] overflow-hidden pointer-events-none pl-[2px] pt-[2px]">
    <div className="w-[320px] h-[101px] border-4 border-white/80 shadow-[0_0_3px_rgba(60,50,60,0.7),inset_0_0_4px_rgba(60,50,60,0.7)] pl-[15px] pt-[14px] whitespace-nowrap text-white">
      <p className="text-[30px] leading-9 font-bold font-['Noto_Sans_CJK_SC',sans-serif] [text-shadow:0_0_3px_#666,0_0_6px_#888]">迅捷屏幕录像工具</p>
      <p className="text-[19px] leading-[30px] font-bold font-['DejaVu_Sans_Mono',monospace] [text-shadow:0_0_2px_#666,0_0_3px_#888]">www.xunjieshipin.com</p>
    </div>
  </div>
);

const App = () => (
  <div className={`relative min-h-screen flex flex-col overflow-hidden ${ribbonFont}`}>
    <Header />
    <Diagram />
    <div className={`h-[27px] shrink-0 flex items-center pl-[877px] pt-[3px] bg-[#f0eff2] border-t border-[#88888c] text-[15px] text-[#1c1c1c] ${blockFont}`}>80%</div>
    <Taskbar />
    <Watermark />
  </div>
);

export default App;
